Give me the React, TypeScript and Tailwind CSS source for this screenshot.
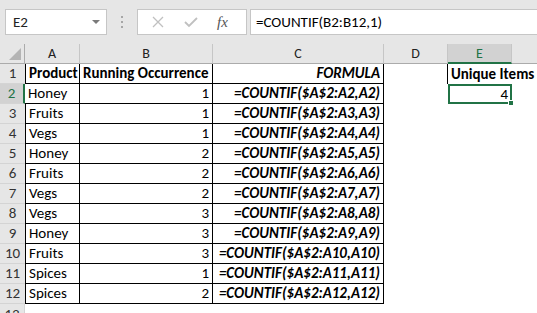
import React from 'react';

const rows: [string, number, string][] = [
  ['Honey', 1, '=COUNTIF($A$2:A2,A2)'],
  ['Fruits', 1, '=COUNTIF($A$2:A3,A3)'],
  ['Vegs', 1, '=COUNTIF($A$2:A4,A4)'],
  ['Honey', 2, '=COUNTIF($A$2:A5,A5)'],
  ['Fruits', 2, '=COUNTIF($A$2:A6,A6)'],
  ['Vegs', 2, '=COUNTIF($A$2:A7,A7)'],
  ['Vegs', 3, '=COUNTIF($A$2:A8,A8)'],
  ['Honey', 3, '=COUNTIF($A$2:A9,A9)'],
  ['Fruits', 3, '=COUNTIF($A$2:A10,A10)'],
  ['Spices', 1, '=COUNTIF($A$2:A11,A11)'],
  ['Spices', 2, '=COUNTIF($A$2:A12,A12)'],
];

const cols = ['A', 'B', 'C', 'D', 'E', 'F'];

const font = { fontFamily: 'Carlito, Calibri, Lato, "Open Sans", sans-serif' };

export default function App() {
  return (
    <div className="w-[537px] h-[313px] overflow-hidden bg-[#e6e6e6] text-black" style={font}>
      {/* formula bar */}
      <div className="flex items-center h-[44px] pb-[9px] pt-[9px]">
        <div className="ml-[5px] w-[102px] h-[26px] bg-white border border-[#c6c6c6] flex items-center justify-between pl-[7px] pr-[6px]">
          <span className="text-[15px] text-[#222]">E2</span>
          <span className="w-0 h-0 border-l-[4px] border-r-[4px] border-t-[4px] border-l-transparent border-r-transparent border-t-[#7a7a7a]" />
        </div>
        <div className="w-[30px] flex flex-col items-center gap-[3px]">
          <span className="w-[2px] h-[2px] bg-[#a6a6a6]" />
          <span className="w-[2px] h-[2px] bg-[#a6a6a6]" />
          <span className="w-[2px] h-[2px] bg-[#a6a6a6]" />
        </div>
        <div className="w-[110px] h-[26px] bg-white border border-[#c6c6c6] flex items-center">
          <svg width="12" height="12" viewBox="0 0 12 12" className="ml-[14px]">
            <path d="M1 1 L11 11 M11 1 L1 11" stroke="#c0c0c0" strokeWidth="1.3" fill="none" />
          </svg>
          <svg width="14" height="12" viewBox="0 0 14 12" className="ml-[20px]">
            <path d="M1 6 L5 10 L13 2" stroke="#c0c0c0" strokeWidth="1.8" fill="none" />
          </svg>
          <span className="ml-[19px] italic text-[15px] text-[#555]" style={{ fontFamily: '"Liberation Serif", serif' }}>fx</span>
        </div>
        <div className="ml-[3px] flex-1 h-[26px] bg-white border-y border-l border-[#c6c6c6] flex items-center pl-[5px] text-[15px]">
          =COUNTIF(B2:B12,1)
        </div>
      </div>

      {/* grid */}
      <div className="grid grid-cols-[25px_55px_133px_171px_64px_64px_64px] auto-rows-[20px] bg-white">
        {/* header row */}
        <div className="bg-[#e6e6e6] border-b border-r border-[#ababab] relative">
          <span className="absolute right-[3px] bottom-[3px] w-0 h-0" style={{ borderBottom: '12px solid #b4b4b4', borderLeft: '12px solid transparent' }} />
        </div>
        {cols.map((c) => (
          <div
            key={c}
            className={
              c === 'E'
                ? 'bg-[#d2d2d2] border-b-2 border-[#217346] border-r border-r-[#c6c6c6] flex items-center justify-center text-[14px] text-[#217346]'
                : 'bg-[#e6e6e6] border-b border-r border-b-[#ababab] border-r-[#c6c6c6] flex items-center justify-center text-[14px] text-[#222]'
            }
          >
            {c}
          </div>
        ))}

        {/* row 1 */}
        <div className="bg-[#e6e6e6] border-b border-[#d4d4d4] flex items-center justify-center text-[15px] text-[#333]">1</div>
        <div className="border-l border-r border-b border-black flex items-center pl-[3px] text-[15px] font-bold">Product</div>
        <div className="border-r border-b border-black flex items-center pl-[3px] text-[15px] font-bold whitespace-nowrap">Running Occurrence</div>
        <div className="border-r border-b border-black flex items-center justify-end pr-[3px] text-[15px] font-bold italic">FORMULA</div>
        <div className="border-r border-black" />
        <div className="col-span-2 flex items-center pl-[3px] text-[15px] font-bold whitespace-nowrap">Unique Items</div>

        {rows.map(([prod, n, f], i) => {
          const r = i + 2;
          return (
            <React.Fragment key={r}>
              <div
                className={
                  r === 2
                    ? 'bg-[#d2d2d2] border-b border-b-[#d4d4d4] border-r-2 border-r-[#217346] flex items-center justify-center text-[15px] text-[#217346]'
                    : 'bg-[#e6e6e6] border-b border-[#d4d4d4] flex items-center justify-center text-[15px] text-[#333]'
                }
              >
                {r}
              </div>
              <div className={`${r === 2 ? '' : 'border-l'} border-r border-b border-black flex items-center pl-[3px] text-[15px]`}>{prod}</div>
              <div className="border-r border-b border-black flex items-center justify-end pr-[3px] text-[15px]">{n}</div>
              <div className="border-r border-b border-black flex items-center justify-end pr-[3px] text-[15px] font-bold italic whitespace-nowrap">{f}</div>
              <div />
              {r === 2 ? (
                <div className="relative border-2 border-[#217346] flex items-center justify-end pr-[2px] text-[15px]">
                  4
                  <span className="absolute right-[-4px] bottom-[-4px] w-[6px] h-[6px] bg-[#217346] border border-white" />
                </div>
              ) : (
                <div />
              )}
              <div />
            </React.Fragment>
          );
        })}

        {/* row 13 */}
        <div className="bg-[#e6e6e6] border-r border-[#d4d4d4] flex items-center justify-center text-[15px] text-[#333]">13</div>
        <div className="col-span-6" />
      </div>
    </div>
  );
}
